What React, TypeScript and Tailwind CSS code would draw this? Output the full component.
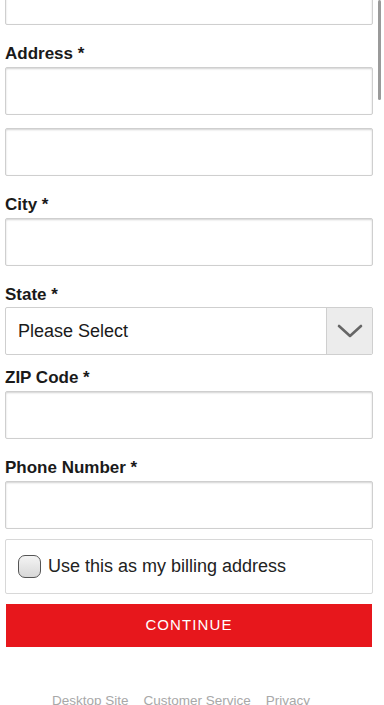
import React from "react";

const inputCls =
  "block w-full h-[48px] border border-[#cfcfcf] rounded-[2px] bg-white shadow-[inset_0_1px_2px_rgba(0,0,0,0.18)]";
const labelCls = "block text-[17px] leading-[20px] font-bold text-[#1a1a1a]";

function Label({ children, className = "" }: { children: React.ReactNode; className?: string }) {
  return <label className={`${labelCls} ${className}`}>{children}</label>;
}

export default function App() {
  return (
    <div
      className="relative w-[384px] h-[705px] overflow-hidden bg-white"
      style={{ fontFamily: '"Liberation Sans", Arial, sans-serif' }}
    >
      <div className="flex flex-col pl-[5px] w-[373px]">
        <div className={`${inputCls} -mt-[23px]`} />
        <Label className="mt-[19px]">Address *</Label>
        <div className={`${inputCls} mt-[3px]`} />
        <div className={`${inputCls} mt-[13px]`} />
        <Label className="mt-[19px]">City *</Label>
        <div className={`${inputCls} mt-[3px]`} />
        <Label className="mt-[19px]">State *</Label>
        <div className="mt-[2px] flex h-[48px] w-full border border-[#cfcfcf] rounded-[2px] bg-white">
          <div className="flex-1 flex items-center pl-[12px] text-[18px] text-[#1a1a1a]">
            Please Select
          </div>
          <div className="w-[46px] border-l border-[#cfcfcf] bg-[#ececec] flex items-center justify-center">
            <svg width="26" height="14" viewBox="0 0 26 14" fill="none">
              <path d="M2 2 L13 12 L24 2" stroke="#666" strokeWidth="2.6" strokeLinecap="round" strokeLinejoin="round" />
            </svg>
          </div>
        </div>
        <Label className="mt-[13px]">ZIP Code *</Label>
        <div className={`${inputCls} mt-[3px]`} />
        <Label className="mt-[19px]">Phone Number *</Label>
        <div className={`${inputCls} mt-[3px]`} />
        <div className="mt-[10px] h-[55px] border border-[#d8d8d8] rounded-[2px] flex items-center pl-[12px]">
          <span className="w-[23px] h-[23px] rounded-[7px] border-[1.5px] border-[#555] bg-gradient-to-b from-[#f4f4f4] to-[#d8d8d8]" />
          <span className="ml-[7px] text-[18px] text-[#222]">Use this as my billing address</span>
        </div>
        <button className="mt-[10px] mx-[1px] h-[43px] bg-[#e7171c] text-white text-[15px] tracking-[1.1px]">
          CONTINUE
        </button>
      </div>
      <div className="mt-[44px] flex justify-center gap-[15px] pr-[22px] text-[13.5px] leading-[20px] text-[#a8a8a8]">
        <span>Desktop Site</span>
        <span>Customer Service</span>
        <span>Privacy</span>
      </div>
      <div className="absolute left-[378px] top-0 w-[3px] h-[100px] rounded-full bg-[#9a9a9a]" />
    </div>
  );
}
